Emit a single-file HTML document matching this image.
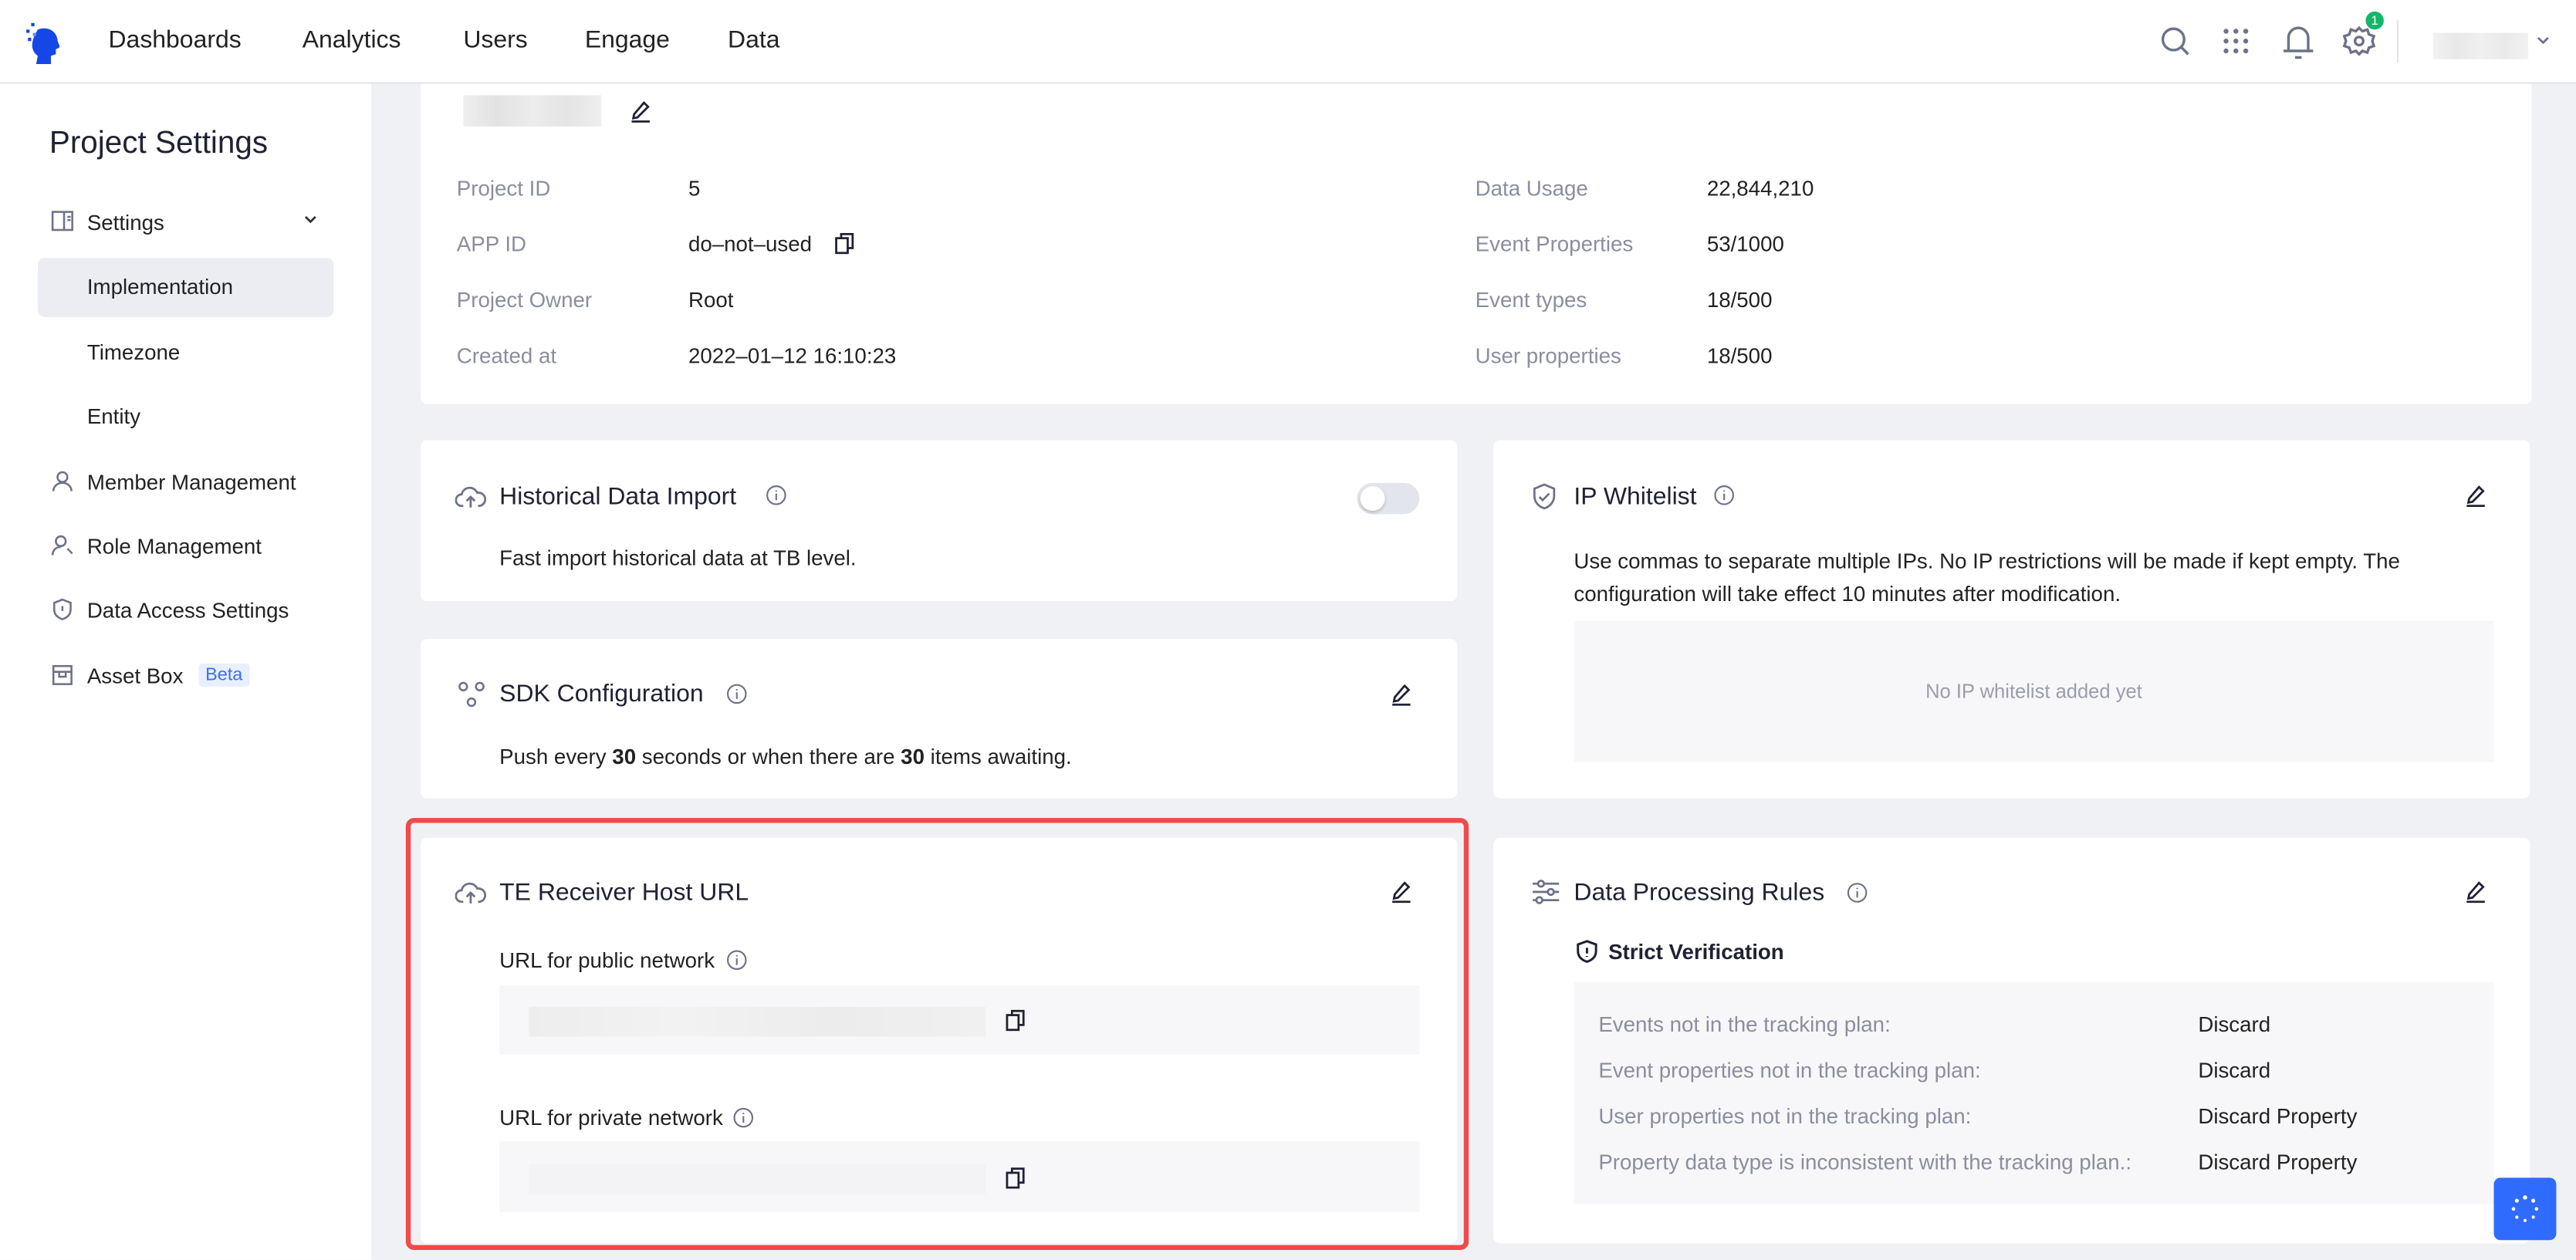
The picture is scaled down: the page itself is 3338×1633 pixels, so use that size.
<!DOCTYPE html>
<html><head><meta charset="utf-8"><style>
*{box-sizing:border-box;margin:0;padding:0}
body{width:3338px;height:1632px;overflow:hidden;background:#f0f1f5;font-family:"Liberation Sans",sans-serif;color:#1f2233}
#w{width:1568px;height:767px;transform:scale(2.1288);transform-origin:0 0;position:relative;background:#f0f1f5}
.a{position:absolute}
.hdr{left:0;top:0;width:1568px;height:51px;background:#fff;border-bottom:1px solid #e2e4ea}
.nav{top:16px;font-size:15px;color:#222}
.side{left:0;top:51px;width:226px;height:716px;background:#fff}
.card{background:#fff;border-radius:4px}
.lbl{font-size:13px;color:#8a8e9e}
.val{font-size:13px;color:#222}
.si{font-size:13px;color:#222}
.t{font-size:15px;color:#1f2233}
.s{font-size:13px;color:#222}
svg{position:absolute}
.blur{background:linear-gradient(90deg,#eee,#e2e2e2,#ececec,#e4e4e4,#eee)}
</style></head><body><div id="w">
<div class="a hdr"></div>
<svg style="left:14px;top:12px" width="26" height="28" viewBox="0 0 26 28"><path d="M9 6c5-2 11 0 12 6 0 2 2 4 1 5l-2 1 0 3-3 1 0 5-9 0 1-5c-4-3-5-8 0-16z" fill="#1447e6"/><rect x="5" y="2" width="2" height="2" fill="#1447e6"/><rect x="2" y="6" width="2" height="2" fill="#1447e6"/><rect x="6" y="8" width="2" height="2" fill="#6b8cf5"/><rect x="3" y="11" width="2" height="2" fill="#1447e6"/></svg>
<div class="a nav" style="left:66px">Dashboards</div>
<div class="a nav" style="left:184px">Analytics</div>
<div class="a nav" style="left:282px">Users</div>
<div class="a nav" style="left:356px">Engage</div>
<div class="a nav" style="left:443px">Data</div>
<svg style="left:1314px;top:15px" width="20" height="20" viewBox="0 0 20 20" fill="none" stroke="#6e7287" stroke-width="1.6"><circle cx="9" cy="9" r="6.5"/><path d="M14 14l4 4"/></svg>
<svg style="left:1352px;top:16px" width="18" height="18" viewBox="0 0 18 18" fill="#6e7287"><circle cx="3" cy="3" r="1.5"/><circle cx="9" cy="3" r="1.5"/><circle cx="15" cy="3" r="1.5"/><circle cx="3" cy="9" r="1.5"/><circle cx="9" cy="9" r="1.5"/><circle cx="15" cy="9" r="1.5"/><circle cx="3" cy="15" r="1.5"/><circle cx="9" cy="15" r="1.5"/><circle cx="15" cy="15" r="1.5"/></svg>
<svg style="left:1389px;top:14px" width="20" height="22" viewBox="0 0 20 22" fill="none" stroke="#6e7287" stroke-width="1.6"><path d="M4 17V9a6 6 0 0112 0v8M1 17h18M8 21h4"/></svg>
<svg style="left:1426px;top:15px" width="20" height="20" viewBox="0 0 20 20" fill="none" stroke="#6e7287" stroke-width="1.6"><path d="M10 2l2 2 3-1 1 3 3 1-1 3 1 3-3 1-1 3-3-1-2 2-2-2-3 1-1-3-3-1 1-3-1-3 3-1 1-3 3 1z"/><circle cx="10" cy="10" r="2.5"/></svg>
<div class="a" style="left:1440px;top:7px;width:11px;height:11px;border-radius:50%;background:#12b76a;color:#fff;font-size:8px;text-align:center;line-height:11px">1</div>
<div class="a" style="left:1459px;top:12px;width:1px;height:26px;background:#e2e4ea"></div>
<div class="a blur" style="left:1481px;top:20px;width:58px;height:16px;opacity:.8"></div>
<svg style="left:1543px;top:21px" width="10" height="8" viewBox="0 0 10 8" fill="none" stroke="#6e7287" stroke-width="1.3"><path d="M2 2l3 3 3-3"/></svg>

<div class="a side"></div>
<div class="a" style="left:30px;top:77px;font-size:19px;color:#1f2233">Project Settings</div>
<svg style="left:31px;top:128px" width="14" height="13" viewBox="0 0 14 13" fill="none" stroke="#6e7287" stroke-width="1.2"><rect x="1" y="1" width="12" height="11"/><path d="M8 1v11M10 4h2M10 6h2"/></svg>
<div class="a si" style="left:53px;top:128px">Settings</div>
<svg style="left:184px;top:130px" width="10" height="8" viewBox="0 0 10 8" fill="none" stroke="#333" stroke-width="1.3"><path d="M2 2l3 3 3-3"/></svg>
<div class="a" style="left:23px;top:157px;width:180px;height:36px;background:#ecedf3;border-radius:4px"></div>
<div class="a si" style="left:53px;top:167px">Implementation</div>
<div class="a si" style="left:53px;top:207px">Timezone</div>
<div class="a si" style="left:53px;top:246px">Entity</div>
<svg style="left:31px;top:286px" width="14" height="14" viewBox="0 0 14 14" fill="none" stroke="#6e7287" stroke-width="1.2"><circle cx="7" cy="4.5" r="3"/><path d="M1.5 13c0-3 2.5-5 5.5-5s5.5 2 5.5 5"/></svg>
<div class="a si" style="left:53px;top:286px">Member Management</div>
<svg style="left:31px;top:325px" width="14" height="14" viewBox="0 0 14 14" fill="none" stroke="#6e7287" stroke-width="1.2"><circle cx="6" cy="4.5" r="3"/><path d="M1 13c0-3 2-5 5-5M10 9l3 3"/></svg>
<div class="a si" style="left:53px;top:325px">Role Management</div>
<svg style="left:31px;top:364px" width="14" height="14" viewBox="0 0 14 14" fill="none" stroke="#6e7287" stroke-width="1.2"><path d="M7 1l5 2v4c0 3-2 5-5 6-3-1-5-3-5-6V3z"/><path d="M7 5v3"/></svg>
<div class="a si" style="left:53px;top:364px">Data Access Settings</div>
<svg style="left:31px;top:404px" width="14" height="14" viewBox="0 0 14 14" fill="none" stroke="#6e7287" stroke-width="1.2"><rect x="1.5" y="1.5" width="11" height="11"/><path d="M1.5 5h11M5 5v3h4V5"/></svg>
<div class="a si" style="left:53px;top:404px">Asset Box</div>
<div class="a" style="left:121px;top:404px;font-size:11px;color:#3b6ff5;background:#e8efff;padding:1px 4px;border-radius:2px">Beta</div>

<div class="a card" style="left:256px;top:51px;width:1285px;height:195px;border-radius:0 0 4px 4px"></div>
<div class="a blur" style="left:282px;top:58px;width:84px;height:19px"></div>
<svg style="left:383px;top:61px" width="14" height="14" viewBox="0 0 14 14" fill="none" stroke="#1f2233" stroke-width="1.3"><path d="M9 1.5l2.5 2.5L5 10.5 2.5 11 3 8.5z M1.5 13h11"/></svg>
<div class="a lbl" style="left:278px;top:107px">Project ID</div><div class="a val" style="left:419px;top:107px">5</div>
<div class="a lbl" style="left:278px;top:141px">APP ID</div><div class="a val" style="left:419px;top:141px">do–not–used</div>
<svg style="left:507px;top:141px" width="14" height="14" viewBox="0 0 14 14" fill="none" stroke="#1f2233" stroke-width="1.3"><rect x="2" y="4" width="7" height="9"/><path d="M5 4V1.5h7V10H9"/></svg>
<div class="a lbl" style="left:278px;top:175px">Project Owner</div><div class="a val" style="left:419px;top:175px">Root</div>
<div class="a lbl" style="left:278px;top:209px">Created at</div><div class="a val" style="left:419px;top:209px">2022–01–12 16:10:23</div>
<div class="a lbl" style="left:898px;top:107px">Data Usage</div><div class="a val" style="left:1039px;top:107px">22,844,210</div>
<div class="a lbl" style="left:898px;top:141px">Event Properties</div><div class="a val" style="left:1039px;top:141px">53/1000</div>
<div class="a lbl" style="left:898px;top:175px">Event types</div><div class="a val" style="left:1039px;top:175px">18/500</div>
<div class="a lbl" style="left:898px;top:209px">User properties</div><div class="a val" style="left:1039px;top:209px">18/500</div>

<!-- Historical -->
<div class="a card" style="left:256px;top:268px;width:631px;height:98px"></div>
<svg style="left:277px;top:295px" width="19" height="16" viewBox="0 0 19 16" fill="none" stroke="#6e7287" stroke-width="1.3"><path d="M5 13H4a3.5 3.5 0 010-7 5 5 0 019.5-1A3.5 3.5 0 0115 13h-1M9.5 14V8M7 10l2.5-2.5L12 10"/></svg>
<div class="a t" style="left:304px;top:294px">Historical Data Import</div>
<svg style="left:466px;top:295px" width="13" height="13" viewBox="0 0 13 13" fill="none" stroke="#6e7287"><circle cx="6.5" cy="6.5" r="5.5"/><path d="M6.5 5.5v4M6.5 3.5v.8"/></svg>
<div class="a" style="left:826px;top:294px;width:38px;height:19px;border-radius:10px;background:#e3e5ec"></div>
<div class="a" style="left:828px;top:296px;width:15px;height:15px;border-radius:50%;background:#fff;box-shadow:0 1px 2px rgba(0,0,0,.2)"></div>
<div class="a s" style="left:304px;top:332px">Fast import historical data at TB level.</div>

<!-- SDK -->
<div class="a card" style="left:256px;top:389px;width:631px;height:97px"></div>
<svg style="left:278px;top:415px" width="18" height="16" viewBox="0 0 18 16" fill="none" stroke="#6e7287" stroke-width="1.2"><circle cx="4" cy="3" r="2.3"/><circle cx="14" cy="3" r="2.3"/><circle cx="9" cy="12.5" r="2.3"/></svg>
<div class="a t" style="left:304px;top:414px">SDK Configuration</div>
<svg style="left:442px;top:416px" width="13" height="13" viewBox="0 0 13 13" fill="none" stroke="#6e7287"><circle cx="6.5" cy="6.5" r="5.5"/><path d="M6.5 5.5v4M6.5 3.5v.8"/></svg>
<svg style="left:846px;top:416px" width="14" height="14" viewBox="0 0 14 14" fill="none" stroke="#1f2233" stroke-width="1.3"><path d="M9 1.5l2.5 2.5L5 10.5 2.5 11 3 8.5z M1.5 13h11"/></svg>
<div class="a s" style="left:304px;top:453px">Push every <b>30</b> seconds or when there are <b>30</b> items awaiting.</div>

<!-- TE -->
<div class="a" style="left:247px;top:498px;width:647px;height:263px;border:3px solid #f04a4a;border-radius:5px"></div>
<div class="a card" style="left:256px;top:510px;width:631px;height:247px"></div>
<svg style="left:277px;top:536px" width="19" height="16" viewBox="0 0 19 16" fill="none" stroke="#6e7287" stroke-width="1.3"><path d="M5 13H4a3.5 3.5 0 010-7 5 5 0 019.5-1A3.5 3.5 0 0115 13h-1M9.5 14V8M7 10l2.5-2.5L12 10"/></svg>
<div class="a t" style="left:304px;top:535px">TE Receiver Host URL</div>
<svg style="left:846px;top:536px" width="14" height="14" viewBox="0 0 14 14" fill="none" stroke="#1f2233" stroke-width="1.3"><path d="M9 1.5l2.5 2.5L5 10.5 2.5 11 3 8.5z M1.5 13h11"/></svg>
<div class="a s" style="left:304px;top:577px">URL for public network</div>
<svg style="left:442px;top:578px" width="13" height="13" viewBox="0 0 13 13" fill="none" stroke="#6e7287"><circle cx="6.5" cy="6.5" r="5.5"/><path d="M6.5 5.5v4M6.5 3.5v.8"/></svg>
<div class="a" style="left:304px;top:600px;width:560px;height:42px;background:#f7f7f9"></div>
<div class="a" style="left:322px;top:613px;width:278px;height:18px;background:linear-gradient(90deg,#ededed,#f2f2f2,#ececec,#f0f0f0)"></div>
<svg style="left:611px;top:614px" width="14" height="14" viewBox="0 0 14 14" fill="none" stroke="#1f2233" stroke-width="1.3"><rect x="2" y="4" width="7" height="9"/><path d="M5 4V1.5h7V10H9"/></svg>
<div class="a s" style="left:304px;top:673px">URL for private network</div>
<svg style="left:446px;top:674px" width="13" height="13" viewBox="0 0 13 13" fill="none" stroke="#6e7287"><circle cx="6.5" cy="6.5" r="5.5"/><path d="M6.5 5.5v4M6.5 3.5v.8"/></svg>
<div class="a" style="left:304px;top:695px;width:560px;height:43px;background:#f7f7f9"></div>
<div class="a" style="left:322px;top:709px;width:278px;height:18px;background:#f3f3f5"></div>
<svg style="left:611px;top:710px" width="14" height="14" viewBox="0 0 14 14" fill="none" stroke="#1f2233" stroke-width="1.3"><rect x="2" y="4" width="7" height="9"/><path d="M5 4V1.5h7V10H9"/></svg>

<!-- IP whitelist -->
<div class="a card" style="left:909px;top:268px;width:631px;height:218px"></div>
<svg style="left:932px;top:294px" width="16" height="17" viewBox="0 0 16 17" fill="none" stroke="#6e7287" stroke-width="1.3"><path d="M8 1l6 2.5V8c0 4-3 6.5-6 7.5C5 14.5 2 12 2 8V3.5z"/><path d="M5 8.5l2 2 4-4"/></svg>
<div class="a t" style="left:958px;top:294px">IP Whitelist</div>
<svg style="left:1043px;top:295px" width="13" height="13" viewBox="0 0 13 13" fill="none" stroke="#6e7287"><circle cx="6.5" cy="6.5" r="5.5"/><path d="M6.5 5.5v4M6.5 3.5v.8"/></svg>
<svg style="left:1500px;top:295px" width="14" height="14" viewBox="0 0 14 14" fill="none" stroke="#1f2233" stroke-width="1.3"><path d="M9 1.5l2.5 2.5L5 10.5 2.5 11 3 8.5z M1.5 13h11"/></svg>
<div class="a s" style="left:958px;top:332px;width:560px;line-height:20px">Use commas to separate multiple IPs. No IP restrictions will be made if kept empty. The configuration will take effect 10 minutes after modification.</div>
<div class="a" style="left:958px;top:378px;width:560px;height:86px;background:#f7f7f9"></div>
<div class="a" style="left:958px;top:414px;width:560px;text-align:center;font-size:12px;color:#9a9eac">No IP whitelist added yet</div>

<!-- Data processing -->
<div class="a card" style="left:909px;top:510px;width:631px;height:247px"></div>
<svg style="left:932px;top:535px" width="18" height="16" viewBox="0 0 18 16" fill="none" stroke="#6e7287" stroke-width="1.3"><path d="M1 3h16M1 8h16M1 13h16"/><circle cx="6" cy="3" r="1.8" fill="#fff"/><circle cx="12" cy="8" r="1.8" fill="#fff"/><circle cx="5" cy="13" r="1.8" fill="#fff"/></svg>
<div class="a t" style="left:958px;top:535px">Data Processing Rules</div>
<svg style="left:1124px;top:537px" width="13" height="13" viewBox="0 0 13 13" fill="none" stroke="#6e7287"><circle cx="6.5" cy="6.5" r="5.5"/><path d="M6.5 5.5v4M6.5 3.5v.8"/></svg>
<svg style="left:1500px;top:536px" width="14" height="14" viewBox="0 0 14 14" fill="none" stroke="#1f2233" stroke-width="1.3"><path d="M9 1.5l2.5 2.5L5 10.5 2.5 11 3 8.5z M1.5 13h11"/></svg>
<svg style="left:959px;top:572px" width="14" height="15" viewBox="0 0 14 15" fill="none" stroke="#1f2233" stroke-width="1.4"><path d="M7 1l5.5 2v4c0 3.5-2.5 5.5-5.5 6.5C4 12.5 1.5 10.5 1.5 7V3z"/><path d="M7 5v3.5M7 10v.5"/></svg>
<div class="a" style="left:979px;top:572px;font-size:13px;font-weight:bold;color:#1f2233">Strict Verification</div>
<div class="a" style="left:958px;top:598px;width:560px;height:135px;background:#f7f7f9"></div>
<div class="a lbl" style="left:973px;top:616px">Events not in the tracking plan:</div><div class="a val" style="left:1338px;top:616px">Discard</div>
<div class="a lbl" style="left:973px;top:644px">Event properties not in the tracking plan:</div><div class="a val" style="left:1338px;top:644px">Discard</div>
<div class="a lbl" style="left:973px;top:672px">User properties not in the tracking plan:</div><div class="a val" style="left:1338px;top:672px">Discard Property</div>
<div class="a lbl" style="left:973px;top:700px">Property data type is inconsistent with the tracking plan.:</div><div class="a val" style="left:1338px;top:700px">Discard Property</div>

<div class="a" style="left:1518px;top:717px;width:38px;height:38px;border-radius:4px;background:#2f6bff"></div>
<svg style="left:1527px;top:726px" width="20" height="20" viewBox="0 0 20 20" fill="#fff"><circle cx="10" cy="3" r="1.3"/><circle cx="15" cy="5" r="1.2"/><circle cx="17" cy="10" r="1.1"/><circle cx="15" cy="15" r="1"/><circle cx="10" cy="17" r="1"/><circle cx="5" cy="15" r="1"/><circle cx="3" cy="10" r="1.1"/><circle cx="5" cy="5" r="1.2"/></svg>
</div></body></html>
